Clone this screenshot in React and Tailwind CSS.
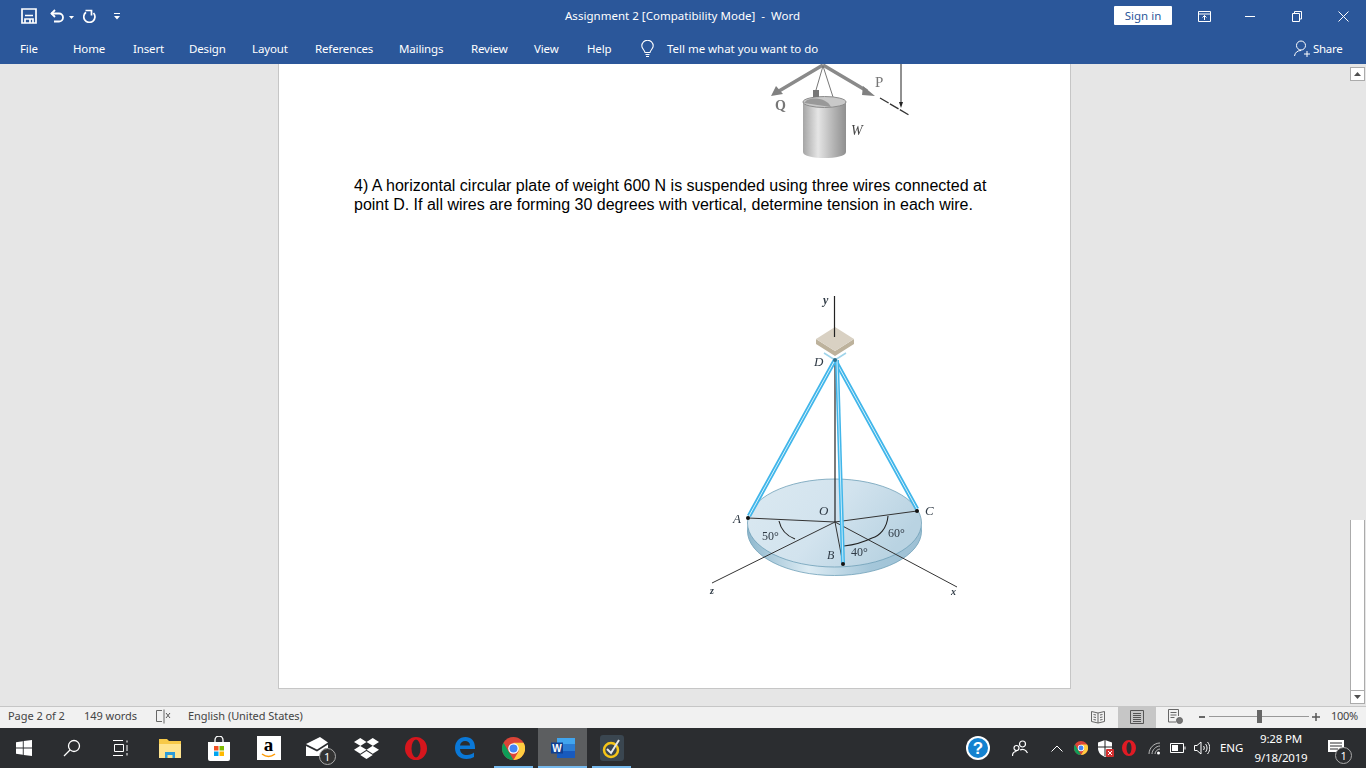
import React from "react";
import { FaDropbox } from "react-icons/fa";

const ui = "font-['Noto_Sans',sans-serif]";
const tabs = [
  ["File", 18, 35], ["Home", 33, 27], ["Insert", 29, 27], ["Design", 36, 27], ["Layout", 36, 27],
  ["References", 57, 27], ["Mailings", 45, 27], ["Review", 37, 26], ["View", 26, 27], ["Help", 25, 29],
];

function TitleBar() {
  return (
    <div className="h-[32px] flex items-center text-white text-[11.5px] relative">
      <svg width="16" height="16" viewBox="0 0 16 16" className="ml-[21px]" fill="none" stroke="#fff" strokeWidth="1.700">
        <path d="M1 1h14v14H1z" /><path d="M4 7.500h8M4 15v-4h8v4" /><path d="M9 11v4" />
      </svg>
      <svg width="18" height="14" viewBox="0 0 18 14" className="ml-[13px]" fill="none" stroke="#fff" strokeWidth="1.800">
        <path d="M1 4.500h8a4 4 0 0 1 0 8H4" /><path d="M5 1 1.500 4.500 5 8" />
      </svg>
      <svg width="5" height="3" viewBox="0 0 5 3" className="ml-[1px] mt-[2px]"><path d="M0 0h5L2.500 3z" fill="#fff" /></svg>
      <svg width="14" height="14" viewBox="0 0 14 14" className="ml-[9px]" fill="none" stroke="#fff" strokeWidth="1.700">
        <path d="M10.500 4A5.600 5.600 0 1 1 3 3.300" /><path d="M2.500 1.500h6v5" />
      </svg>
      <svg width="6" height="7" viewBox="0 0 6 7" className="ml-[17px]" fill="#fff"><path d="M0 0h6v1H0zM0 3h6L3 6.500z" /></svg>
      <div className="ml-[445px] w-[236px] whitespace-nowrap tracking-[0.02px]">Assignment 2 [Compatibility Mode]&nbsp; -&nbsp; Word</div>
      <button className="ml-[313px] mt-[-1px] w-[58px] h-[19px] bg-white text-[#2b579a] text-center leading-[18px] rounded-[1px]">Sign in</button>
      <svg width="13" height="11" viewBox="0 0 13 11" className="ml-[26px]" fill="none" stroke="#fff">
        <path d="M.5.5h12v10H.5zM.5 3h12M6.500 9V4.500M4.500 6.500l2-2 2 2" />
      </svg>
      <svg width="10" height="1" viewBox="0 0 10 1" className="ml-[34px]"><path d="M0 .5h10" stroke="#fff" /></svg>
      <svg width="10" height="11" viewBox="0 0 10 11" className="ml-[37px]" fill="none" stroke="#fff">
        <path d="M.5 2.500h7v8h-7zM2.500 2.500V.5h7v7.500h-2" />
      </svg>
      <svg width="11" height="11" viewBox="0 0 11 11" className="ml-[36px]" fill="none" stroke="#fff"><path d="M.5.500l10 10M10.500.500l-10 10" /></svg>
    </div>
  );
}

function TabBar() {
  return (
    <div className="h-[32px] flex items-center text-white text-[11.5px] tracking-[-0.15px] pl-[20px] pt-[1px]">
      {tabs.map(([t, w, g]) => (
        <div key={t} style={{ width: w, marginRight: g }} className="whitespace-nowrap">{t}</div>
      ))}
      <svg width="13" height="18" viewBox="0 0 13 18" fill="none" stroke="#fff" strokeWidth="1.100" className="mr-[13px]">
        <path d="M4 12.500C3.500 10 .8 8.500.8 6a5.700 5.700 0 0 1 11.400 0c0 2.500-2.700 4-3.200 6.500zM4.500 14.500h4M5 16.500h3" />
      </svg>
      <div className="whitespace-nowrap w-[151px] tracking-[-0.02px]">Tell me what you want to do</div>
      <svg width="16" height="17" viewBox="0 0 16 17" fill="none" stroke="#fff" className="ml-[476px]">
        <circle cx="7" cy="5.500" r="4.500" /><path d="M.5 16c.5-3.500 3-5.500 6.500-5.500M10 14h6M13 11v6" />
      </svg>
      <div className="ml-[3px] tracking-[-0.3px]">Share</div>
    </div>
  );
}

function TopFigure() {
  const serif = "'Liberation Serif',serif";
  return (
    <svg viewBox="750 64 180 96" width="180" height="96" className="ml-[472px] blur-[0.6px] shrink-0">
      <defs>
        <linearGradient id="can" x1="0" x2="1" y1="0" y2="0">
          <stop offset="0" stopColor="#a5a5a5" /><stop offset="0.35" stopColor="#e5e5e5" /><stop offset="0.7" stopColor="#b5b5b5" /><stop offset="1" stopColor="#8f8f8f" />
        </linearGradient>
      </defs>
      <path d="M822 65 778 91M822 65 866 91" stroke="#8a8a8a" strokeWidth="3.500" />
      <path d="M770 96 775 86 782 94zM874 96 862 86 861 95z" fill="#808080" />
      <path d="M822 66 815 90M822 66 832 97" stroke="#777" strokeWidth="1" fill="none" />
      <path d="M802 102V152C802 160 845 160 845 152V102z" fill="url(#can)" />
      <ellipse cx="823.500" cy="102" rx="21.500" ry="5.500" fill="#c9c9c9" stroke="#8b8b8b" />
      <path d="M806 100C812 97 826 98 830 107L803 103z" fill="#999" />
      <path d="M812 97v-7h6v7z" fill="#777" />
      <path d="M900 64V105" stroke="#222" strokeWidth="1" />
      <path d="M898 102h4l-2 6z" fill="#222" />
      <path d="M879 98 908 115" stroke="#333" strokeWidth="1.300" strokeDasharray="10 1.500" />
      <text x="874" y="87" fontSize="15" fontFamily={serif} fill="#777">P</text>
      <text x="774" y="110" fontSize="14" fontWeight="bold" fontFamily={serif} fill="#777">Q</text>
      <text x="850" y="135" fontSize="14" fontStyle="italic" fontFamily={serif} fill="#444">W</text>
    </svg>
  );
}

function DiscFigure() {
  const serif = "'Liberation Serif',serif";
  const lbl = { fontFamily: serif, fill: "#2f3a45" };
  return (
    <svg viewBox="700 290 280 310" width="280" height="310" className="ml-[421px] mt-[75px] blur-[0.4px] shrink-0">
      <defs>
        <linearGradient id="top" x1="0" x2="1" y1="0" y2="0.4">
          <stop offset="0" stopColor="#dbe9f1" /><stop offset="0.55" stopColor="#d2e3ee" /><stop offset="1" stopColor="#b9d3e2" />
        </linearGradient>
        <linearGradient id="rim" x1="0" x2="1" y1="0" y2="0">
          <stop offset="0" stopColor="#8fb8ce" /><stop offset="0.35" stopColor="#dcebf3" /><stop offset="0.7" stopColor="#a5c7da" /><stop offset="1" stopColor="#9dc0d4" />
        </linearGradient>
      </defs>
      <ellipse cx="834.500" cy="532" rx="87" ry="44.500" fill="url(#rim)" stroke="#6fa0b8" strokeWidth="0.8" />
      <ellipse cx="834.500" cy="524" rx="87" ry="44" fill="url(#top)" stroke="#6fa0b8" strokeWidth="0.8" />
      <path d="M835 523 748 519M835 523 917 512M835 523 712 584M835 523 957 588" stroke="#333" strokeWidth="1" fill="none" />
      <path d="M835 523 843 565" stroke="#333" strokeWidth="1" />
      <path d="M779 522C781 531 787 537 795 540" stroke="#222" strokeWidth="1.100" fill="none" />
      <path d="M888 517C887 530 879 537 872 539" stroke="#222" strokeWidth="1.100" fill="none" />
      <path d="M844 547C853 546 864 543 872 539" stroke="#222" strokeWidth="1.100" fill="none" />
      <path d="M835 361V523" stroke="#222" strokeWidth="1.200" />
      <path d="M835 361 749 517M835 361 917 510" stroke="#41b6ea" strokeWidth="4.400" fill="none" />
      <path d="M835 361 749 517M835 361 917 510" stroke="#d8f2fc" strokeWidth="1" fill="none" />
      <path d="M837 361 843 564" stroke="#41b6ea" strokeWidth="4" fill="none" />
      <path d="M837 361 843 564" stroke="#d8f2fc" strokeWidth="0.9" fill="none" />
      <path d="M816 340V345L835 357 854 345V340L835 352z" fill="#bdb29c" />
      <path d="M835 328 854 340 835 352 816 340z" fill="#d9d1c3" />
      <path d="M824 354 835 361 846 354" stroke="#9fd4ea" strokeWidth="1.500" fill="none" />
      <circle cx="835" cy="361" r="2" fill="#2a6f8e" />
      <path d="M834.500 297V338" stroke="#222" strokeWidth="1.200" />
      <circle cx="748" cy="519" r="2" fill="#111" /><circle cx="917" cy="512" r="2" fill="#111" /><circle cx="843" cy="565" r="2" fill="#111" />
      <text x="823" y="305" fontSize="12" fontStyle="italic" fontWeight="bold" style={lbl}>y</text>
      <text x="814" y="367" fontSize="13" fontStyle="italic" style={lbl}>D</text>
      <text x="819" y="516" fontSize="13" fontStyle="italic" style={lbl}>O</text>
      <text x="733" y="524" fontSize="13" fontStyle="italic" style={lbl}>A</text>
      <text x="925" y="516" fontSize="13" fontStyle="italic" style={lbl}>C</text>
      <text x="827" y="560" fontSize="12" fontStyle="italic" style={lbl}>B</text>
      <text x="762" y="541" fontSize="12" style={lbl}>50°</text>
      <text x="888" y="538" fontSize="12" style={lbl}>60°</text>
      <text x="851" y="557" fontSize="12" style={lbl}>40°</text>
      <text x="710" y="595" fontSize="10" fontStyle="italic" fontWeight="bold" style={lbl}>z</text>
      <text x="951" y="596" fontSize="10" fontStyle="italic" fontWeight="bold" style={lbl}>x</text>
    </svg>
  );
}

function Scrollbar() {
  return (
    <div className="w-[17px] shrink-0 flex flex-col items-center pt-[3px] bg-[#e6e6e6]">
      <div className="w-[15px] h-[14px] bg-white border border-[#ababab] flex items-center justify-center">
        <svg width="7" height="4" viewBox="0 0 7 4"><path d="M3.500 0 7 4H0z" fill="#505050" /></svg>
      </div>
      <div className="h-[439px]" />
      <div className="w-[15px] h-[170px] bg-white border-x border-[#ababab]" />
      <div className="w-[15px] h-[14px] bg-white border border-[#ababab] flex items-center justify-center">
        <svg width="7" height="4" viewBox="0 0 7 4"><path d="M3.500 4 7 0H0z" fill="#505050" /></svg>
      </div>
    </div>
  );
}

function Main() {
  return (
    <div className="h-[642px] flex bg-[#e6e6e6] overflow-hidden">
      <div className="flex-1">
        <div className="ml-[278px] w-[793px] h-[625px] bg-white border-x border-b border-[#c6c6c6] flex flex-col">
          <TopFigure />
          <p className="ml-[75px] mt-[16px] w-[660px] h-[38px] text-black text-[16px] leading-[19px] font-['Liberation_Sans',Arial,sans-serif]">
            4) A horizontal circular plate of weight 600 N is suspended using three wires connected at point D. If all wires are forming 30 degrees with vertical, determine tension in each wire.
          </p>
          <DiscFigure />
        </div>
      </div>
      <Scrollbar />
    </div>
  );
}

function StatusBar() {
  return (
    <div className="h-[22px] bg-[#f1f1f1] border-t border-[#c6c6c6] flex items-center text-[11px] text-[#444] tracking-[-0.05px] pb-[2px]">
      <div className="ml-[8px] w-[57px] whitespace-nowrap">Page 2 of 2</div>
      <div className="ml-[19px] w-[53px] whitespace-nowrap">149 words</div>
      <svg width="15" height="15" viewBox="0 0 15 15" className="ml-[19px]" fill="none" stroke="#666">
        <path d="M6 1.500H.5v11H6M8 .5v14" /><path d="M10 4l4 5M14 4l-4 5" stroke="#555" />
      </svg>
      <div className="ml-[17px] w-[120px] whitespace-nowrap">English (United States)</div>
      <svg width="14" height="14" viewBox="0 0 14 14" className="ml-[783px]" fill="none" stroke="#666">
        <path d="M.5 1.500 7 3l6.500-1.500v10L7 13 .5 11.500zM7 3v10M2.500 4.500l2.500.5M2.500 7l2.500.5M2.500 9.500l2.500.5M9 5l2.500-.5M9 7.500l2.500-.5M9 10l2.500-.5" />
      </svg>
      <div className="ml-[13px] w-[38px] h-[21px] mt-[2px] bg-[#c6c6c6] flex items-center justify-center pb-[1px]">
        <svg width="14" height="14" viewBox="0 0 14 14" fill="none" stroke="#555"><path d="M.5.5h13v13H.5zM3 3.500h8M3 5.500h8M3 7.500h8M3 9.500h8M3 11.500h8" /></svg>
      </div>
      <svg width="15" height="15" viewBox="0 0 15 15" className="ml-[12px]" fill="none" stroke="#666">
        <path d="M8 13H.5V.5h10V7M2.500 3.500h6M2.500 6h6M2.500 8.500h4" /><circle cx="11.500" cy="11.500" r="3" fill="#777" />
      </svg>
      <div className="ml-[16px] w-[6px] h-[2px] bg-[#666]" />
      <div className="ml-[4px] w-[100px] h-[1px] bg-[#999] relative">
        <div className="absolute left-[48px] top-[-6px] w-[5px] h-[13px] bg-[#666]" />
      </div>
      <svg width="8" height="8" viewBox="0 0 8 8" className="ml-[3px]"><path d="M0 4h8M4 0v8" stroke="#555" strokeWidth="1.500" /></svg>
      <div className="ml-[11px] w-[28px] whitespace-nowrap tracking-[-0.3px]">100%</div>
    </div>
  );
}

const Slot = ({ w = 49, active, line, children }) => (
  <div style={{ width: w }} className={`h-[40px] flex items-center justify-center relative ${active ? "bg-[#5c5e60]" : ""}`}>
    {children}
    {line && <div className="absolute bottom-0 inset-x-[5px] h-[2px] bg-[#76b9ed]" style={active ? { left: 0, right: 0 } : undefined} />}
  </div>
);

function Taskbar() {
  return (
    <div className="h-[40px] bg-[#2b2d30] flex items-center text-white text-[11.5px] tracking-[-0.1px]">
      <Slot w={48}>
        <svg width="16" height="16" viewBox="0 0 16 16" fill="#fff"><path d="M0 2.200 6.800 1.200v6.300H0zM7.700 1.100 16 0v7.500H7.700zM0 8.400h6.800v6.400L0 13.800zM7.700 8.400H16V16l-8.300-1.100z" /></svg>
      </Slot>
      <Slot w={48}>
        <svg width="18" height="18" viewBox="0 0 18 18" fill="none" stroke="#fff" strokeWidth="1.300"><circle cx="11" cy="7" r="5.500" /><path d="M7 11 1 17" /></svg>
      </Slot>
      <Slot>
        <svg width="17" height="16" viewBox="0 0 17 16" fill="none" stroke="#fff"><path d="M1 .5h10M2.500 4.500h9v7h-9zM1 15.500h10M15 .5v2M15 5v6M15 13v2.500" /></svg>
      </Slot>
      <Slot>
        <svg width="22" height="19" viewBox="0 0 22 19"><path d="M0 0h8l2 2h12v17H0z" fill="#f7c948" /><path d="M0 5h22v14H0z" fill="#ffe48f" /><path d="M6 13h10v6h-2.500v-3h-5v3H6z" fill="#2b9bd8" /></svg>
      </Slot>
      <Slot w={50}>
        <svg width="22" height="25" viewBox="0 0 22 25">
          <path d="M7 7V4a4 4 0 0 1 8 0v3" fill="none" stroke="#fff" strokeWidth="1.300" />
          <path d="M0 6h22v17a2 2 0 0 1-2 2H2a2 2 0 0 1-2-2z" fill="#fff" />
          <path d="M6 10h4.500v4.500H6z" fill="#f25022" /><path d="M11.500 10H16v4.500h-4.500z" fill="#7fba00" /><path d="M6 15.500h4.500V20H6z" fill="#00a4ef" /><path d="M11.500 15.500H16V20h-4.500z" fill="#ffb900" />
        </svg>
      </Slot>
      <Slot>
        <div className="w-[24px] h-[24px] bg-white flex flex-col items-center justify-center text-black font-['Liberation_Serif',serif] font-bold text-[19px] leading-[16px] pb-[1px]">
          a
          <svg width="16" height="5" viewBox="0 0 16 5"><path d="M1 1c4 3 9 3 13 0" fill="none" stroke="#f90" strokeWidth="1.500" /></svg>
        </div>
      </Slot>
      <Slot>
        <div className="relative w-[24px] h-[24px]">
          <svg width="24" height="20" viewBox="0 0 24 20" className="mt-[1px]" fill="#fff"><path d="M0 7 14 0l8 5.500L11 12.500z" /><path d="M0 9l11 5.500 11-7V11a7 7 0 0 0-7 8H0z" /></svg>
          <div className="absolute left-[13px] top-[12px] w-[17px] h-[17px] rounded-full bg-[#333] border border-[#aaa] text-center leading-[15px] text-[11px]">1</div>
        </div>
      </Slot>
      <Slot>
        <FaDropbox size={25} color="#fff" />
      </Slot>
      <Slot>
        <svg width="22" height="23" viewBox="0 0 22 23"><path fillRule="evenodd" d="M11 0a11 11.500 0 1 0 0 23 11 11.500 0 1 0 0-23zM11 2.500a4.500 9 0 1 1 0 18 4.500 9 0 1 1 0-18z" fill="#d6161d" /></svg>
      </Slot>
      <Slot>
        <svg width="21" height="22" viewBox="0 0 21 22"><path d="M21 12H6c.3 4 3 6 7 6 3 0 5.500-1 7-2.500V20c-2 1.300-4.500 2-7.500 2C5.500 22 1 17.500 1 11 1 4.500 5.500 0 11.500 0 17 0 21 4 21 10.500zM6 8.500h10c0-3-2-4.500-5-4.500-2.700 0-4.500 1.700-5 4.500z" fill="#0a78d7" /></svg>
      </Slot>
      <Slot line>
        <svg width="23" height="23" viewBox="0 0 24 24">
          <circle cx="12" cy="12" r="12" fill="#db4437" />
          <path d="M12 24A12 12 0 0 1 1.600 6L7 15.500l5 8.500z" fill="#0f9d58" />
          <path d="M12 24l5.500-9.500L12 6h10.500A12 12 0 0 1 12 24z" fill="#ffcd40" />
          <circle cx="12" cy="12" r="5.500" fill="#fff" /><circle cx="12" cy="12" r="4.200" fill="#4285f4" />
        </svg>
      </Slot>
      <Slot active line>
        <svg width="24" height="20" viewBox="0 0 24 20">
          <path d="M6 0h18v20H6z" fill="#185abd" /><path d="M6 0h18v6.500H6z" fill="#41a5ee" /><path d="M6 6.500h18v6.500H6z" fill="#2b7cd3" />
          <path d="M0 4.500h12v11H0z" fill="#103f91" />
          <text x="6" y="13.500" textAnchor="middle" fontSize="10" fontWeight="bold" fill="#fff" fontFamily="'Liberation Sans',sans-serif">W</text>
        </svg>
      </Slot>
      <Slot line>
        <div className="w-[24px] h-[26px] rounded-[3px] bg-[#3a4650] flex items-center justify-center">
          <svg width="20" height="21" viewBox="0 0 20 21"><circle cx="9" cy="12" r="7" fill="none" stroke="#f5c518" strokeWidth="2.500" /><path d="M5 11l4 4 8-13" fill="none" stroke="#e8e8e8" strokeWidth="2" /></svg>
        </div>
      </Slot>
      <svg width="24" height="24" viewBox="0 0 24 24" className="ml-[330px]">
        <circle cx="12" cy="12" r="12" fill="#fff" /><circle cx="12" cy="12" r="10" fill="#1482d0" />
        <text x="12" y="18" textAnchor="middle" fontSize="17" fontWeight="bold" fill="#fff" fontFamily="'Liberation Sans',sans-serif">?</text>
      </svg>
      <svg width="16" height="17" viewBox="0 0 16 17" fill="none" stroke="#fff" strokeWidth="1.200" className="ml-[22px]">
        <circle cx="10.500" cy="4" r="3" /><circle cx="4.500" cy="8" r="2.500" /><path d="M.5 16c0-3 1.500-4.500 4-4.500M8 10c3-1.500 6 0 7.500 3" />
      </svg>
      <svg width="12" height="7" viewBox="0 0 12 7" fill="none" stroke="#fff" className="ml-[23px]"><path d="M.5 6.500 6 1l5.500 5.500" /></svg>
      <svg width="14" height="14" viewBox="0 0 24 24" className="ml-[11px]">
        <circle cx="12" cy="12" r="12" fill="#db4437" /><path d="M12 24A12 12 0 0 1 1.600 6L7 15.500l5 8.500z" fill="#0f9d58" /><path d="M12 24l5.500-9.500L12 6h10.500A12 12 0 0 1 12 24z" fill="#ffcd40" /><circle cx="12" cy="12" r="5.500" fill="#fff" /><circle cx="12" cy="12" r="4.200" fill="#4285f4" />
      </svg>
      <svg width="16" height="17" viewBox="0 0 16 17" className="ml-[10px]">
        <path d="M7 0l7 2.500V8c0 4.500-3 7.500-7 9-4-1.500-7-4.500-7-9V2.500z" fill="#fff" /><path d="M0 7h14M7 0v16" stroke="#222" strokeWidth="1" />
        <rect x="8" y="9" width="8" height="8" rx="1" fill="#d32f2f" /><path d="M10 11l4 4M14 11l-4 4" stroke="#fff" />
      </svg>
      <svg width="14" height="16" viewBox="0 0 14 16" className="ml-[8px]"><path fillRule="evenodd" d="M7 0a7 8 0 1 0 0 16 7 8 0 1 0 0-16zM7 2a2.500 6 0 1 1 0 12 2.500 6 0 1 1 0-12z" fill="#e01b24" /></svg>
      <svg width="13" height="13" viewBox="0 0 13 13" fill="none" stroke="#bbb" className="ml-[12px]">
        <path d="M1 12C1 6 6 1 12 1M4 12c0-4 4-8 8-8M7 12c0-2.500 2.500-5 5-5" /><circle cx="10.500" cy="11" r="1.500" fill="#fff" stroke="none" />
      </svg>
      <svg width="16" height="10" viewBox="0 0 16 10" className="ml-[9px]" fill="none" stroke="#fff">
        <path d="M.5.5h13v9H.5z" /><path d="M2 2h6v6H2z" fill="#fff" stroke="none" /><path d="M15 3.500v3" />
      </svg>
      <svg width="16" height="14" viewBox="0 0 16 14" className="ml-[8px]" fill="none" stroke="#fff">
        <path d="M.5 4.500H3L7 1v12L3 9.500H.5zM9.500 5c1 1.200 1 2.800 0 4M11.500 3c2 2.300 2 5.700 0 8M13.500 1c3 3.500 3 8.500 0 12" />
      </svg>
      <div className="ml-[10px] w-[24px] whitespace-nowrap">ENG</div>
      <div className="ml-[10px] w-[54px] flex flex-col items-center leading-[19px] whitespace-nowrap tracking-[-0.2px]">
        <div>9:28 PM</div><div>9/18/2019</div>
      </div>
      <div className="ml-[20px] relative w-[16px] h-[16px]">
        <svg width="16" height="15" viewBox="0 0 16 15" fill="#fff"><path d="M0 0h16v12H0z" /><path d="M2 3h12M2 6h12M2 9h8" stroke="#2b2d30" /></svg>
        <div className="absolute left-[7px] top-[7px] w-[17px] h-[17px] rounded-full bg-[#2b2d30] border border-[#aaa] text-center leading-[15px] text-[11px]">1</div>
      </div>
    </div>
  );
}

export default function App() {
  return (
    <div className={`w-[1366px] h-[768px] overflow-hidden ${ui}`}>
      <div className="bg-[#2b579a]">
        <TitleBar />
        <TabBar />
      </div>
      <Main />
      <StatusBar />
      <Taskbar />
    </div>
  );
}
